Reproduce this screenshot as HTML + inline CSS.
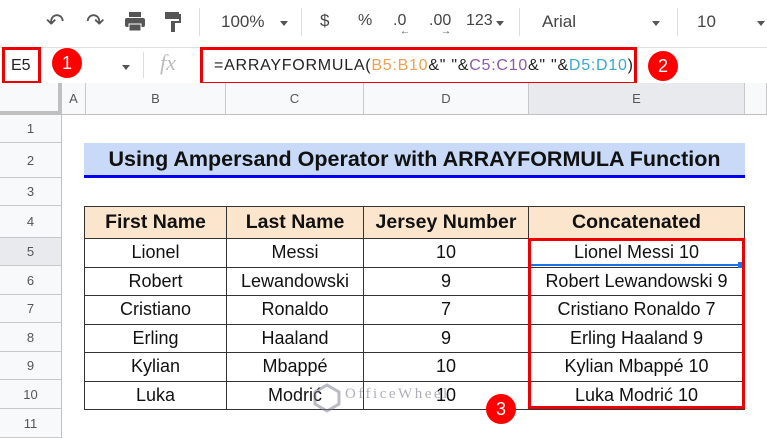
<!DOCTYPE html>
<html><head><style>
*{margin:0;padding:0;box-sizing:border-box}
body{width:767px;height:438px;overflow:hidden;background:#fff;font-family:"Liberation Sans",Arial,sans-serif;position:relative}
.a{position:absolute}
.tb{color:#444;font-size:16px}
.circ{position:absolute;width:30px;height:30px;border-radius:50%;background:#f00;color:#fff;font-size:18px;text-align:center;line-height:30px}
.rh{position:absolute;left:0;width:62px;background:#f8f9fa;border-bottom:1px solid #c8c8c8;border-right:1px solid #c0c0c0;color:#555;font-size:13px;text-align:center}
.ch{position:absolute;top:83px;height:32px;background:#f8f9fa;border-right:1px solid #c8c8c8;border-bottom:1px solid #c0c0c0;color:#555;font-size:13px;text-align:center;line-height:32px}
table{position:absolute;left:84px;top:206px;border-collapse:collapse}
td{border:1.5px solid #333;text-align:center;font-size:18px;color:#111;padding:0;height:28.5px;white-space:nowrap}
th{background:#fce5cd;border:1.5px solid #333;font-size:19.5px;color:#111;height:32px;white-space:nowrap}
</style></head><body>
<div class="a tb" style="left:46px;top:9px;font-size:22px;color:#555">↶</div>
<div class="a tb" style="left:86px;top:9px;font-size:22px;color:#555">↷</div>
<svg class="a" style="left:124px;top:12px" width="22" height="20"><rect x="5" y="0" width="12" height="5" fill="#555"/><rect x="1" y="6" width="20" height="9" rx="2" fill="#555"/><rect x="5" y="12" width="12" height="7" fill="#555" stroke="#fff" stroke-width="1"/></svg>
<svg class="a" style="left:164px;top:12px" width="18" height="22"><rect x="1" y="0" width="14" height="7" fill="#555"/><rect x="15" y="2" width="2" height="8" fill="#555"/><rect x="7" y="9" width="10" height="2" fill="#555"/><rect x="7" y="10" width="4" height="10" fill="#555"/></svg>
<div class="a" style="left:199px;top:8px;width:1px;height:28px;background:#ddd"></div>
<div class="a tb" style="left:221px;top:12px;font-size:17px">100%</div>
<div class="a" style="left:280px;top:21px;border:4px solid transparent;border-top:5px solid #555"></div>
<div class="a" style="left:301px;top:8px;width:1px;height:28px;background:#ddd"></div>
<div class="a tb" style="left:320px;top:11px;font-size:17px">$</div>
<div class="a tb" style="left:358px;top:12px;font-size:16px">%</div>
<div class="a tb" style="left:393px;top:12px;font-size:16px">.0</div>
<div class="a tb" style="left:400px;top:26px;font-size:10px">←</div>
<div class="a tb" style="left:429px;top:12px;font-size:16px">.00</div>
<div class="a tb" style="left:441px;top:26px;font-size:10px">→</div>
<div class="a tb" style="left:466px;top:12px;font-size:16px">123</div>
<div class="a" style="left:496px;top:21px;border:4px solid transparent;border-top:5px solid #555"></div>
<div class="a" style="left:519px;top:8px;width:1px;height:28px;background:#ddd"></div>
<div class="a tb" style="left:542px;top:12px;font-size:17px">Arial</div>
<div class="a" style="left:652px;top:21px;border:4px solid transparent;border-top:5px solid #555"></div>
<div class="a" style="left:677px;top:8px;width:1px;height:28px;background:#ddd"></div>
<div class="a tb" style="left:697px;top:12px;font-size:17px">10</div>
<div class="a" style="left:757px;top:21px;border:4px solid transparent;border-top:5px solid #555"></div>
<div class="a" style="left:0;top:47px;width:767px;height:1px;background:#e0e0e0"></div>
<div class="a" style="left:2px;top:47px;width:39px;height:37px;border:3px solid #e00;font-size:16px;line-height:31px;padding-left:6px;color:#222">E5</div>
<div class="circ" style="left:52px;top:48px">1</div>
<div class="a" style="left:122px;top:65px;border:4px solid transparent;border-top:5px solid #555"></div>
<div class="a" style="left:143px;top:52px;width:1px;height:26px;background:#ddd"></div>
<div class="a" style="left:160px;top:50px;font-family:'Liberation Serif',serif;font-style:italic;font-size:22px;color:#bbb">fx</div>
<div class="a" style="left:200px;top:47px;width:437px;height:38px;border:3px solid #e00;font-size:16px;line-height:32px;padding-left:11px;color:#222;white-space:nowrap;letter-spacing:0.75px">=ARRAYFORMULA(<span style="color:#f0a050">B5:B10</span>&amp;" "&amp;<span style="color:#8a5ab0">C5:C10</span>&amp;" "&amp;<span style="color:#3aa7d0">D5:D10</span>)</div>
<div class="circ" style="left:648px;top:51px">2</div>
<div class="a" style="left:0;top:83px;width:62px;height:32px;background:#f8f9fa;border-right:4px solid #c0c0c0;border-bottom:4px solid #c0c0c0"></div>
<div class="ch" style="left:62px;width:24px">A</div>
<div class="ch" style="left:86px;width:140px">B</div>
<div class="ch" style="left:226px;width:138px">C</div>
<div class="ch" style="left:364px;width:165px">D</div>
<div class="ch" style="left:529px;width:216px;background:#e8eaed">E</div>
<div class="ch" style="left:745px;width:22px"></div>
<div class="rh" style="top:115px;height:28px;line-height:28px">1</div>
<div class="rh" style="top:143px;height:35px;line-height:35px">2</div>
<div class="rh" style="top:178px;height:28px;line-height:28px">3</div>
<div class="rh" style="top:206px;height:32px;line-height:32px">4</div>
<div class="rh" style="top:238px;height:28px;line-height:28px;background:#e8eaed">5</div>
<div class="rh" style="top:266px;height:29px;line-height:29px">6</div>
<div class="rh" style="top:295px;height:28px;line-height:28px">7</div>
<div class="rh" style="top:323px;height:29px;line-height:29px">8</div>
<div class="rh" style="top:352px;height:28px;line-height:28px">9</div>
<div class="rh" style="top:380px;height:29px;line-height:29px">10</div>
<div class="rh" style="top:409px;height:29px;line-height:29px">11</div>
<div class="a" style="left:84px;top:143px;width:661px;height:35px;background:#c9daf8;border-bottom:3px solid #0000ee;font-weight:bold;font-size:21.5px;line-height:32px;text-align:center;color:#111;white-space:nowrap">Using Ampersand Operator with ARRAYFORMULA Function</div>
<table>
<tr><th style="width:142px">First Name</th><th style="width:137px">Last Name</th><th style="width:165px">Jersey Number</th><th style="width:216px">Concatenated</th></tr>
<tr><td>Lionel</td><td>Messi</td><td>10</td><td>Lionel Messi 10</td></tr>
<tr><td>Robert</td><td>Lewandowski</td><td>9</td><td>Robert Lewandowski 9</td></tr>
<tr><td>Cristiano</td><td>Ronaldo</td><td>7</td><td>Cristiano Ronaldo 7</td></tr>
<tr><td>Erling</td><td>Haaland</td><td>9</td><td>Erling Haaland 9</td></tr>
<tr><td>Kylian</td><td>Mbappé</td><td>10</td><td>Kylian Mbappé 10</td></tr>
<tr><td>Luka</td><td>Modrić</td><td>10</td><td>Luka Modrić 10</td></tr>
</table>
<div class="a" style="left:531px;top:264px;width:210px;height:2px;background:#1a73e8"></div>
<div class="a" style="left:738px;top:262px;width:6px;height:6px;background:#1a73e8"></div>
<div class="a" style="left:528px;top:238px;width:217px;height:171px;border:3px solid #e00"></div>
<div class="a" style="left:345px;top:386px;font-family:'Liberation Serif',serif;font-size:15px;letter-spacing:2.5px;color:rgba(120,120,140,0.6)">OfficeWheel</div>
<svg class="a" style="left:312px;top:383px" width="30" height="30"><path d="M15 2 L27 9 L27 21 L15 28 L3 21 L3 9 Z" fill="none" stroke="rgba(120,120,140,0.5)" stroke-width="3"/></svg>
<div class="circ" style="left:486px;top:394px">3</div>
</body></html>
